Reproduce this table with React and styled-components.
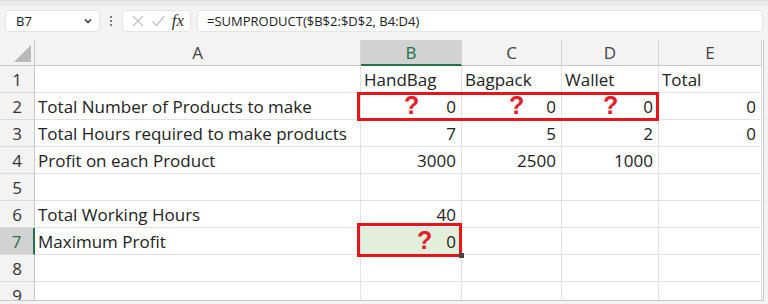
import React from 'react'
import styled, { createGlobalStyle } from 'styled-components'

const GlobalStyle = createGlobalStyle`
  body {
    margin: 0;
    background: #f3f3f3;
    font-family: "Open Sans", "Liberation Sans", sans-serif;
  }
`

const Frame = styled.div`
  width: 768px;
  height: 304px;
  overflow: hidden;
  background: #f3f3f3;
`

const TopStrip = styled.div`
  height: 6px;
  background: #e9e9e9;
  border-top: 1px solid #dcdcdc;
  box-sizing: border-box;
`

const FormulaBar = styled.div`
  display: flex;
  align-items: center;
  height: 22px;
  padding: 4px 5px 8px 5px;
`

const Box = styled.div`
  height: 22px;
  box-sizing: border-box;
  background: #fff;
  border: 1px solid #e4e4e4;
  border-radius: 4px;
  display: flex;
  align-items: center;
`

const NameBox = styled(Box)`
  width: 95px;
  padding: 0 6px 0 10px;
  justify-content: space-between;
  font-size: 13px;
  color: #222;
`

const Dots = styled.div`
  width: 22px;
  display: flex;
  flex-direction: column;
  align-items: center;
  gap: 2px;
  span {
    width: 2px;
    height: 2px;
    background: #555;
    border-radius: 1px;
  }
`

const FxBox = styled(Box)`
  width: 69px;
  padding: 0 6px 0 8px;
  justify-content: space-between;
  margin-right: 6px;
`

const Fx = styled.span`
  font-family: "Liberation Serif", serif;
  font-style: italic;
  font-size: 17px;
  color: #333;
`

const FormulaInput = styled(Box)`
  flex: 1;
  padding-left: 9px;
  font-size: 13px;
  color: #222;
`

const Sheet = styled.div`
  position: relative;
  width: 763px;
  height: 260px;
  overflow: hidden;
  display: grid;
  grid-template-columns: 35px 326px 101px 100px 97px 103px;
  grid-auto-rows: 27px;
  grid-template-rows: 26px;
  background: #fff;
  border-right: 1px solid #c8c8c8;
  border-bottom: 1px solid #c8c8c8;
`

const Corner = styled.div`
  background: #f3f3f3;
  border-right: 1px solid #c8c8c8;
  border-bottom: 1px solid #c8c8c8;
  position: relative;
  &::after {
    content: '';
    position: absolute;
    right: 3px;
    bottom: 3px;
    border-left: 17px solid transparent;
    border-bottom: 17px solid #b9b9b9;
  }
`

const ColHead = styled.div`
  box-sizing: border-box;
  background: ${p => (p.$active ? '#d2d2d2' : '#f3f3f3')};
  color: ${p => (p.$active ? '#217346' : '#444')};
  border-right: 1px solid #d4d4d4;
  border-bottom: ${p => (p.$active ? '2px solid #217346' : '1px solid #c8c8c8')};
  display: flex;
  align-items: center;
  justify-content: center;
  font-size: 17px;
`

const RowHead = styled.div`
  box-sizing: border-box;
  background: ${p => (p.$active ? '#d2d2d2' : '#f3f3f3')};
  color: ${p => (p.$active ? '#217346' : '#333')};
  border-right: ${p => (p.$active ? '2px solid #217346' : '1px solid #c8c8c8')};
  border-bottom: 1px solid #dadada;
  display: flex;
  align-items: center;
  justify-content: center;
  font-size: 17px;
`

const Cell = styled.div`
  box-sizing: border-box;
  background: ${p => (p.$fill ? '#e2efda' : '#fff')};
  border-right: 1px solid #e1e1e1;
  border-bottom: 1px solid #e1e1e1;
  display: flex;
  align-items: center;
  justify-content: ${p => (p.$num ? 'flex-end' : 'flex-start')};
  gap: ${p => p.$gap || 0}px;
  padding: 1px 5px 0 3px;
  font-size: 17px;
  color: #222;
  white-space: nowrap;
  overflow: visible;
`

const Ask = styled.span`
  font-family: "Liberation Sans", sans-serif;
  font-weight: bold;
  font-size: 25px;
  line-height: 1;
  color: #e3202a;
  margin-top: -3px;
`

const RedBox = styled.div`
  position: absolute;
  box-sizing: border-box;
  border: 3px solid #e8141c;
  pointer-events: none;
`

const Handle = styled.div`
  position: absolute;
  width: 5px;
  height: 5px;
  background: #444;
`

const cols = ['A', 'B', 'C', 'D', 'E']

const rows = [
  ['', 'HandBag', 'Bagpack', 'Wallet', 'Total'],
  ['Total Number of Products to make', { v: '0', q: 27 }, { v: '0', q: 22 }, { v: '0', q: 25 }, '0'],
  ['Total Hours required to make products', '7', '5', '2', '0'],
  ['Profit on each Product', '3000', '2500', '1000', ''],
  ['', '', '', '', ''],
  ['Total Working Hours', '40', '', '', ''],
  ['Maximum Profit', { v: '0', q: 14, fill: true }, '', '', ''],
  ['', '', '', '', ''],
  ['', '', '', '', '']
]

const isNum = v => /^\d+$/.test(v)

export default function App() {
  return (
    <Frame>
      <GlobalStyle />
      <TopStrip />
      <FormulaBar>
        <NameBox>
          B7
          <svg width="10" height="10" viewBox="0 0 10 10">
            <path d="M2 3.5 L5 6.5 L8 3.5" fill="none" stroke="#333" strokeWidth="1.5" />
          </svg>
        </NameBox>
        <Dots><span /><span /><span /></Dots>
        <FxBox>
          <svg width="14" height="14" viewBox="0 0 14 14">
            <path d="M2 2 L12 12 M12 2 L2 12" stroke="#c4c4c4" strokeWidth="1.3" fill="none" />
          </svg>
          <svg width="15" height="14" viewBox="0 0 15 14">
            <path d="M1.5 7.5 L5.5 11.5 L13.5 2" stroke="#c4c4c4" strokeWidth="1.3" fill="none" />
          </svg>
          <Fx>fx</Fx>
        </FxBox>
        <FormulaInput>=SUMPRODUCT($B$2:$D$2, B4:D4)</FormulaInput>
      </FormulaBar>
      <Sheet>
        <Corner />
        {cols.map(c => (
          <ColHead key={c} $active={c === 'B'}>{c}</ColHead>
        ))}
        {rows.map((r, i) => (
          <React.Fragment key={i}>
            <RowHead $active={i === 6}>{i + 1}</RowHead>
            {r.map((v, j) => {
              if (typeof v === 'object') {
                return (
                  <Cell key={j} $num $gap={v.q} $fill={v.fill}>
                    <Ask>?</Ask>
                    {v.v}
                  </Cell>
                )
              }
              return (
                <Cell key={j} $num={isNum(v)}>{v}</Cell>
              )
            })}
          </React.Fragment>
        ))}
        <RedBox style={{ left: 357, top: 52, width: 302, height: 29 }} />
        <RedBox style={{ left: 357, top: 183, width: 105, height: 34 }} />
        <Handle style={{ left: 459, top: 213 }} />
      </Sheet>
    </Frame>
  )
}
